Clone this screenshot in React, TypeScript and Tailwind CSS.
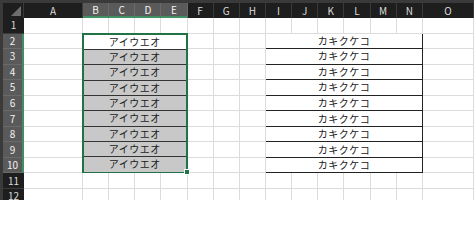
import React from 'react'

const cols = ['A', 'B', 'C', 'D', 'E', 'F', 'G', 'H', 'I', 'J', 'K', 'L', 'M', 'N', 'O']
const rows = [1, 2, 3, 4, 5, 6, 7, 8, 9, 10, 11, 12]

const selCols = ['B', 'C', 'D', 'E']
const boxCols = ['I', 'J', 'K', 'L', 'M', 'N']
const isSelRow = (r: number) => r >= 2 && r <= 10

// cells covered by the two merged blocks are not drawn as plain cells
const covered = (r: number, c: string) => isSelRow(r) && (selCols.includes(c) || boxCols.includes(c))

const font = { fontFamily: '"Noto Sans CJK JP", "Noto Sans", sans-serif' }

export default function App() {
  return (
    <div className="w-[474px] h-[200px] overflow-hidden bg-[#3a3a3a] pt-[3px] pl-[3px]" style={font}>
      <div className="grid grid-cols-[21px_59px_repeat(13,26.15px)_1fr] grid-rows-[15px_repeat(12,15.55px)] bg-white">
        {/* selected range B2:E10 */}
        <div className="col-start-3 col-end-7 row-start-3 row-end-12 -ml-px -mt-px min-h-0 border-2 border-[#217346] bg-white relative flex flex-col">
          {rows.slice(1, 10).map((r) => (
            <div
              key={r}
              className={
                r === 2
                  ? 'flex-1 min-h-0 flex items-center justify-center text-[10px] leading-none text-[#1a1a1a] tracking-[0.5px]'
                  : 'flex-1 min-h-0 flex items-center justify-center text-[10px] leading-none text-[#1a1a1a] tracking-[0.5px] bg-[#c8c8c8] border-t border-[#333333]'
              }
            >
              アイウエオ
            </div>
          ))}
          <div className="absolute -right-[4px] -bottom-[4px] w-[6px] h-[6px] bg-[#217346] border border-white" />
        </div>

        {/* I2:N10 */}
        <div className="col-start-10 col-end-16 row-start-3 row-end-12 -ml-px -mt-px min-h-0 border border-[#222222] bg-white flex flex-col">
          {rows.slice(1, 10).map((r) => (
            <div
              key={r}
              className={
                r === 2
                  ? 'flex-1 min-h-0 flex items-center justify-center text-[10px] leading-none text-[#1a1a1a] tracking-[0.5px]'
                  : 'flex-1 min-h-0 flex items-center justify-center text-[10px] leading-none text-[#1a1a1a] tracking-[0.5px] border-t border-[#222222]'
              }
            >
              カキクケコ
            </div>
          ))}
        </div>

        {/* corner */}
        <div className="bg-[#1e1e1e] border-r border-[#3a3a3a] relative">
          <svg className="absolute right-[2px] bottom-[2px]" width="10" height="10" viewBox="0 0 10 10">
            <polygon points="10,0 10,10 0,10" fill="#6e6e6e" />
          </svg>
        </div>

        {/* column headers */}
        {cols.map((c) => {
          const sel = selCols.includes(c)
          return (
            <div
              key={c}
              className={
                sel
                  ? 'flex items-center justify-center bg-[#5a5a5a] text-[#f2f2f2] text-[10px] leading-none border-r border-[#6a6a6a] border-b-2 border-b-[#3f8f62]'
                  : 'flex items-center justify-center bg-[#1e1e1e] text-[#dcdcdc] text-[10px] leading-none border-r border-[#3a3a3a]'
              }
            >
              {c}
            </div>
          )
        })}

        {/* rows */}
        {rows.map((r) => (
          <React.Fragment key={r}>
            <div
              className={
                isSelRow(r)
                  ? 'flex items-center justify-center bg-[#5a5a5a] text-[#f2f2f2] text-[10px] leading-none border-b border-[#6a6a6a] border-r-2 border-r-[#3f8f62]'
                  : 'flex items-center justify-center bg-[#1e1e1e] text-[#dcdcdc] text-[10px] leading-none border-b border-[#3a3a3a]'
              }
            >
              {r}
            </div>
            {cols
              .filter((c) => !covered(r, c))
              .map((c) => (
                <div key={c} className="border-r border-b border-[#dcdcdc] bg-white" />
              ))}
          </React.Fragment>
        ))}
      </div>
    </div>
  )
}
